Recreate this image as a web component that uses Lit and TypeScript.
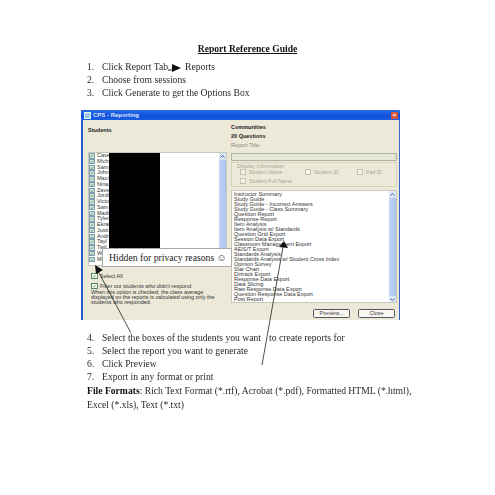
import { LitElement, html, css, svg } from "lit";
import { customElement } from "lit/decorators.js";

const students = ["Cave","Mich","Sam","John","Maci","Nina","Zave","Jordi","Victo","Sam","Madi","Tyler","Ekrai","Justi","Andr","Tayl","Twil","Wi","Mi"];
const reports = ["Instructor Summary","Study Guide","Study Guide - Incorrect Answers","Study Guide - Class Summary","Question Report","Response Report","Item Analysis","Item Analysis w/ Standards","Question Grid Export","Session Data Export","Classroom Management Export","AEIS/T Export","Standards Analysis","Standards Analysis w/ Student Cross Index","Opinion Survey","Star Chart","Dirtrack Export","Response Data Export","Data Slicing","Raw Response Data Export","Question Response Data Export","Post Report"];

const tick = svg`<path d="M1 3L2.5 4.5L5 1.2" fill="none" stroke="#3c8a4a" stroke-width="1"/>`;
const check = html`<svg class="cb" viewBox="0 0 6 5.5">${tick}</svg>`;
const checkG = html`<svg class="g" viewBox="0 0 6 5.5">${tick}</svg>`;
const up = html`<svg class="arr" viewBox="0 0 7 7"><path d="M1.5 4.5L3.5 2.5L5.5 4.5" fill="none" stroke="#3a5a90" stroke-width="1"/></svg>`;
const down = html`<svg class="arr" viewBox="0 0 7 7"><path d="M1.5 2.5L3.5 4.5L5.5 2.5" fill="none" stroke="#3a5a90" stroke-width="1"/></svg>`;

@customElement("app-root")
export class AppRoot extends LitElement {
  static styles = css`
    :host { display: block; width: 495px; height: 495px; background: #fff; position: relative; overflow: hidden; font-family: "Liberation Serif", serif; color: #2a2a2a; }
    .page { display: flex; flex-direction: column; padding-top: 43px; filter: blur(0.45px); }
    h1 { margin: 0 0 5px; font-size: 9.6px; line-height: 12px; font-weight: bold; text-align: center; text-decoration: underline; color: #111; }
    .steps { display: grid; grid-template-columns: 15px 1fr; grid-auto-rows: 13px; padding-left: 87px; font-size: 9.65px; line-height: 13px; }
    .mini { vertical-align: -2px; margin: 0 3px 0 0; }
    .gap { margin-left: 8px; }
    .win { margin: 11px 0 0 81px; width: 319px; height: 210px; box-sizing: border-box; background: #ece9d8; border-left: 2px solid #2a5ad0; border-right: 1px solid #3b62c8; display: flex; flex-direction: column; font-family: "Liberation Sans", sans-serif; font-size: 5.5px; color: #444; position: relative; }
    .title { height: 10px; margin: 0 -1px 0 -2px; border-radius: 3px 3px 0 0; background: linear-gradient(#2a6bea, #0f4fd8 60%, #1a5ce4); color: #dfe8ff; font-size: 6px; font-weight: bold; display: flex; align-items: center; gap: 2px; padding: 0 2px 0 3px; }
    .appi { width: 5px; height: 5px; background: #9fc4ee; border: 1px solid #dfe; }
    .x { margin-left: auto; width: 7px; height: 7px; border-radius: 1px; background: #d9583c; color: #fff; font-size: 6px; line-height: 7px; text-align: center; }
    .body { flex: 1; display: grid; grid-template-columns: 139px 166px; column-gap: 4px; padding: 5px 0 0 5px; }
    .col { display: flex; flex-direction: column; }
    .rcol { margin-top: -2.5px; }
    b { color: #222; font-weight: bold; line-height: 9px; }
    .head { height: 27px; padding-top: 1px; box-sizing: border-box; }
    .list { background: #fff; display: grid; grid-template-columns: 1fr 7px; border: 1px solid #c8c8b8; box-sizing: border-box; overflow: hidden; }
    .stu { height: 114px; }
    .names { position: relative; }
    .name { height: 5.75px; line-height: 5.75px; display: flex; gap: 2px; color: #333; white-space: nowrap; }
    .cb { width: 6px; height: 5.5px; flex: none; background: #d3e3d6; border: 0.5px solid #7d9db4; box-sizing: border-box; }
    .black { position: absolute; left: 20px; top: 0; width: 51px; height: 95px; background: #000; }
    .bar { background: linear-gradient(90deg, #c4d5f4, #a9c3f4); display: flex; flex-direction: column; justify-content: space-between; }
    .arr { width: 7px; height: 7px; background: #dbe6f8; display: block; }
    .privacy { position: absolute; left: 19px; top: 138px; width: 130px; height: 19px; box-sizing: border-box; background: #fff; border: 1px solid #aaa; font: 9.7px/17px "Liberation Serif", serif; color: #222; padding-left: 6px; white-space: nowrap; }
    .chk { display: flex; align-items: center; gap: 2.5px; height: 9.7px; padding-left: 3px; color: #333; }
    .first { margin-top: 5px; }
    .g { width: 6.5px; height: 6px; flex: none; border: 0.75px solid #4f8a5a; background: #fff; box-sizing: border-box; }
    .note { margin: 0 0 0 3px; line-height: 5px; font-size: 5.4px; color: #333; width: 126px; }
    .muted { color: #8a8a7a; line-height: 9.5px; }
    .input { height: 8px; margin-top: 3px; background: #e6e6d4; border: 1px solid #a9b59c; box-sizing: border-box; }
    .group { height: 25px; margin: 1px 0 3px; border: 1px solid #d8d4bf; padding: 0.5px 2px 0 8px; box-sizing: border-box; color: #a8a596; display: grid; grid-template-columns: 65px 52px 1fr; grid-template-rows: 4.5px 8.5px 9px; align-items: center; }
    .legend { grid-column: 1 / -1; margin-left: -3px; }
    .opt { display: flex; align-items: center; gap: 3px; white-space: nowrap; font-size: 5.2px; }
    .o { width: 6px; height: 6px; background: #f4f3ea; border: 0.5px solid #c4c1ac; box-sizing: border-box; }
    .rep { height: 113px; }
    .rep .name { height: 5.05px; line-height: 5.05px; padding-left: 2px; }
    .rows { padding-top: 0.5px; }
    .btns { display: flex; justify-content: flex-end; gap: 8px; padding: 6px 2px 0 0; }
    .btn { width: 37px; height: 9px; background: #f6f5ee; border: 1px solid #556; border-radius: 1.5px; box-sizing: border-box; text-align: center; line-height: 7.5px; color: #444; }
    .after { margin-top: 11px; }
    .formats { padding-left: 87px; font-size: 9.65px; line-height: 14px; margin-top: 1px; white-space: nowrap; }
    .formats b { line-height: inherit; color: #111; }
    .lines { position: absolute; inset: 0; width: 495px; height: 495px; pointer-events: none; }
  `;

  render() {
    return html`
      <div class="page">
        <h1>Report Reference Guide</h1>
        <div class="steps">
          <span>1.</span><span>Click Report Tab<svg class="mini" width="14" height="9" viewBox="0 0 14 9"><path d="M0 7H5" stroke="#222"/><path d="M4 1L13 5L4 9Z" fill="#111"/></svg>Reports</span>
          <span>2.</span><span>Choose from sessions</span>
          <span>3.</span><span>Click Generate to get the Options Box</span>
        </div>
        <div class="win">
          <div class="title"><span class="appi"></span>CPS - Reporting<span class="x">×</span></div>
          <div class="body">
            <div class="col">
              <b class="head">Students</b>
              <div class="list stu">
                <div class="names">
                  ${students.map(n => html`<div class="name">${check}${n}</div>`)}
                  <div class="black"></div>
                </div>
                <div class="bar">${up}</div>
              </div>
              <div class="chk first">${checkG}Select All</div>
              <div class="chk">${checkG}Filter out students who didn't respond</div>
              <div class="note">When this option is checked, the class average displayed on the reports is calculated using only the students who responded.</div>
            </div>
            <div class="col rcol">
              <b>Communities</b>
              <b>20 Questions</b>
              <div class="muted">Report Title:</div>
              <div class="input"></div>
              <div class="group">
                <div class="legend">Display Information</div>
                <div class="opt"><span class="o"></span>Student Name</div>
                <div class="opt"><span class="o"></span>Student ID</div>
                <div class="opt"><span class="o"></span>Pad ID</div>
                <div class="opt"><span class="o"></span>Student Full Name</div>
              </div>
              <div class="list rep">
                <div class="rows">${reports.map(r => html`<div class="name">${r}</div>`)}</div>
                <div class="bar">${up}${down}</div>
              </div>
              <div class="btns"><div class="btn">Preview...</div><div class="btn">Close</div></div>
            </div>
          </div>
          <div class="privacy">Hidden for privacy reasons ☺</div>
        </div>
        <div class="steps after">
          <span>4.</span><span>Select the boxes of the students you want<span class="gap">to create reports for</span></span>
          <span>5.</span><span>Select the report you want to generate</span>
          <span>6.</span><span>Click Preview</span>
          <span>7.</span><span>Export in any format or print</span>
        </div>
        <div class="formats"><b>File Formats</b>: Rich Text Format (*.rtf), Acrobat (*.pdf), Formatted HTML (*.html),<br>Excel (*.xls), Text (*.txt)</div>
      </div>
      <svg class="lines" viewBox="0 0 495 495">
        ${svg`<path d="M131 333L98 271" stroke="#222" stroke-width=".8"/><path d="M95 265L103 270L96 274Z" fill="#111"/>
        <path d="M262 365L283 247" stroke="#222" stroke-width=".8"/><path d="M284 241L288 248L279 247Z" fill="#111"/>`}
      </svg>
    `;
  }
}
